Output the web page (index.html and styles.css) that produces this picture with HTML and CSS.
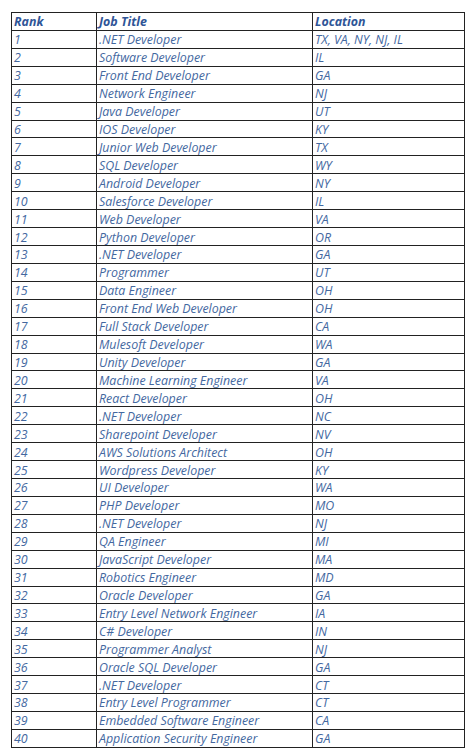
FILE: index.html
```html
<!DOCTYPE html>
<html>
<head>
<meta charset="utf-8">
<link rel="stylesheet" href="styles.css">
</head>
<body>
<table class="jobs">
<colgroup><col class="c-rank"><col class="c-title"><col class="c-loc"></colgroup>
<thead>
<tr><th>Rank</th><th>Job Title</th><th>Location</th></tr>
</thead>
<tbody>
<tr><td>1</td><td>.NET Developer</td><td>TX, VA, NY, NJ, IL</td></tr>
<tr><td>2</td><td>Software Developer</td><td>IL</td></tr>
<tr><td>3</td><td>Front End Developer</td><td>GA</td></tr>
<tr><td>4</td><td>Network Engineer</td><td>NJ</td></tr>
<tr><td>5</td><td>Java Developer</td><td>UT</td></tr>
<tr><td>6</td><td>IOS Developer</td><td>KY</td></tr>
<tr><td>7</td><td>Junior Web Developer</td><td>TX</td></tr>
<tr><td>8</td><td>SQL Developer</td><td>WY</td></tr>
<tr><td>9</td><td>Android Developer</td><td>NY</td></tr>
<tr><td>10</td><td>Salesforce Developer</td><td>IL</td></tr>
<tr><td>11</td><td>Web Developer</td><td>VA</td></tr>
<tr><td>12</td><td>Python Developer</td><td>OR</td></tr>
<tr><td>13</td><td>.NET Developer</td><td>GA</td></tr>
<tr><td>14</td><td>Programmer</td><td>UT</td></tr>
<tr><td>15</td><td>Data Engineer</td><td>OH</td></tr>
<tr><td>16</td><td>Front End Web Developer</td><td>OH</td></tr>
<tr><td>17</td><td>Full Stack Developer</td><td>CA</td></tr>
<tr><td>18</td><td>Mulesoft Developer</td><td>WA</td></tr>
<tr><td>19</td><td>Unity Developer</td><td>GA</td></tr>
<tr><td>20</td><td>Machine Learning Engineer</td><td>VA</td></tr>
<tr><td>21</td><td>React Developer</td><td>OH</td></tr>
<tr><td>22</td><td>.NET Developer</td><td>NC</td></tr>
<tr><td>23</td><td>Sharepoint Developer</td><td>NV</td></tr>
<tr><td>24</td><td>AWS Solutions Architect</td><td>OH</td></tr>
<tr><td>25</td><td>Wordpress Developer</td><td>KY</td></tr>
<tr><td>26</td><td>UI Developer</td><td>WA</td></tr>
<tr><td>27</td><td>PHP Developer</td><td>MO</td></tr>
<tr><td>28</td><td>.NET Developer</td><td>NJ</td></tr>
<tr><td>29</td><td>QA Engineer</td><td>MI</td></tr>
<tr><td>30</td><td>JavaScript Developer</td><td>MA</td></tr>
<tr><td>31</td><td>Robotics Engineer</td><td>MD</td></tr>
<tr><td>32</td><td>Oracle Developer</td><td>GA</td></tr>
<tr><td>33</td><td>Entry Level Network Engineer</td><td>IA</td></tr>
<tr><td>34</td><td>C# Developer</td><td>IN</td></tr>
<tr><td>35</td><td>Programmer Analyst</td><td>NJ</td></tr>
<tr><td>36</td><td>Oracle SQL Developer</td><td>GA</td></tr>
<tr><td>37</td><td>.NET Developer</td><td>CT</td></tr>
<tr><td>38</td><td>Entry Level Programmer</td><td>CT</td></tr>
<tr><td>39</td><td>Embedded Software Engineer</td><td>CA</td></tr>
<tr><td>40</td><td>Application Security Engineer</td><td>GA</td></tr>
</tbody>
</table>
</body>
</html>
```

FILE: styles.css
```css
html, body {
  margin: 0;
  padding: 0;
  background: #ffffff;
}

body {
  padding: 12px 0 0 11px;
}

.jobs {
  border-collapse: collapse;
  table-layout: fixed;
  width: 453px;
  font-family: "Open Sans", "Liberation Sans", sans-serif;
  font-style: italic;
  font-size: 12.4px;
  color: #44689f;
}

.c-rank { width: 85px; }
.c-title { width: 216px; }
.c-loc { width: 152px; }

.jobs tr {
  height: 17.93px;
}

.jobs th,
.jobs td {
  border: 1px solid #222222;
  padding: 1px 0 0 2px;
  text-align: left;
  vertical-align: middle;
  line-height: 15px;
  white-space: nowrap;
  overflow: hidden;
}

.jobs th {
  font-weight: 700;
  color: #2f5597;
}
```
